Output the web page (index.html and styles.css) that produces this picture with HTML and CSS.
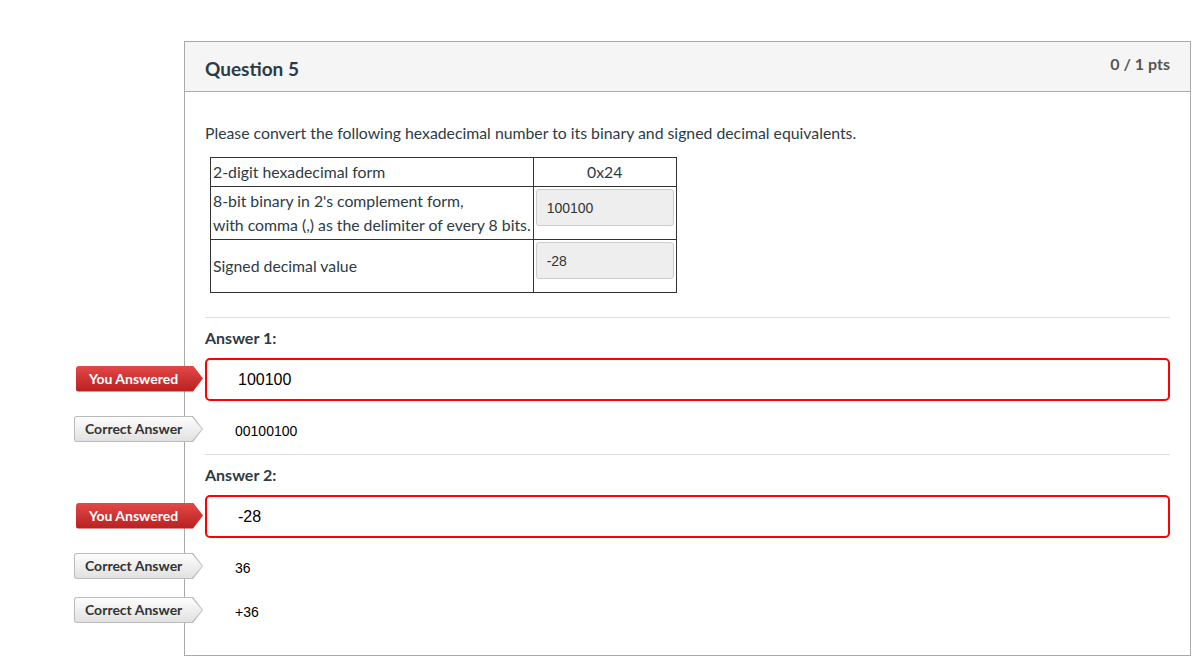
FILE: index.html
```
<!DOCTYPE html>
<html>

<head>
    <title>Question 5</title>
    <link rel="stylesheet" href="styles.css">
</head>

<body>
    <div class="question">
        <div class="question-header">
            <h2 class="question-title">Question 5</h2>
            <span class="points">0 / 1 pts</span>
        </div>
        <div class="question-body">
            <p class="question-text">Please convert the following hexadecimal number to its binary and signed decimal equivalents.</p>
            <table class="convert-table">
                <tr>
                    <td class="cell-label">2-digit hexadecimal form</td>
                    <td class="cell-value">0x24</td>
                </tr>
                <tr>
                    <td class="cell-label">8-bit binary in 2's complement form,<br>with comma (,) as the delimiter of every 8 bits.</td>
                    <td class="cell-input"><input class="blank" type="text" value="100100" readonly></td>
                </tr>
                <tr>
                    <td class="cell-label">Signed decimal value</td>
                    <td class="cell-input"><input class="blank" type="text" value="-28" readonly></td>
                </tr>
            </table>

            <div class="answer-group">
                <h3 class="answer-title">Answer 1:</h3>
                <div class="answer wrong">
                    <span class="tag tag-you">You Answered</span>
                    <span class="answer-text">100100</span>
                </div>
                <div class="answer correct">
                    <span class="tag tag-correct"><span class="tag-inner">Correct Answer</span></span>
                    <span class="answer-text">00100100</span>
                </div>
            </div>

            <div class="answer-group">
                <h3 class="answer-title">Answer 2:</h3>
                <div class="answer wrong">
                    <span class="tag tag-you">You Answered</span>
                    <span class="answer-text">-28</span>
                </div>
                <div class="answer correct">
                    <span class="tag tag-correct"><span class="tag-inner">Correct Answer</span></span>
                    <span class="answer-text">36</span>
                </div>
                <div class="answer correct">
                    <span class="tag tag-correct"><span class="tag-inner">Correct Answer</span></span>
                    <span class="answer-text">+36</span>
                </div>
            </div>
        </div>
    </div>
</body>

</html>
```

FILE: styles.css
```
body {
    margin: 0;
    background-color: white;
    font-family: Lato, "Noto Sans", sans-serif;
    color: #2d3b45;
}

.question {
    margin: 41px 0 0 184px;
    width: 1007px;
    border: 1px solid #aaaaaa;
    box-sizing: border-box;
}

.question-header {
    display: flex;
    justify-content: space-between;
    background-color: #f5f5f5;
    border-bottom: 1px solid #aaaaaa;
    height: 49px;
    padding: 0 20px 0 20px;
}

.question-title {
    margin: 15px 0 0 0;
    font-size: 19px;
    font-weight: bold;
    color: #2d3b45;
    line-height: 24px;
}

.points {
    margin-top: 12px;
    font-size: 16px;
    font-weight: bold;
    color: #555555;
    line-height: 20px;
}

.question-body {
    padding: 30px 20px 23px 20px;
}

.question-text {
    margin: 0 0 13px 0;
    font-size: 15.8px;
    line-height: 22px;
    color: #2d3b45;
}

.convert-table {
    margin-left: 5px;
    border-collapse: collapse;
    font-size: 15.8px;
    color: #2d3b45;
}

.convert-table td {
    border: 1px solid #333333;
    padding: 0 2px;
    line-height: 24px;
}

.cell-label {
    vertical-align: middle;
    padding: 2px 2px !important;
}

.cell-value {
    text-align: center;
    height: 24px;
}

.cell-input {
    vertical-align: top;
    width: 138px;
    padding: 2px 2px 13px 2px !important;
}

.blank {
    display: block;
    box-sizing: border-box;
    width: 138px;
    height: 37px;
    margin: 0;
    padding: 0 10px;
    border: 1px solid #cccccc;
    border-radius: 3px;
    background-color: #eeeeee;
    font-family: "Liberation Sans", Arial, sans-serif;
    font-size: 14px;
    color: #333333;
}

.answer-group {
    border-top: 1px solid #dddddd;
    margin-top: 24px;
}

.answer-group + .answer-group {
    margin-top: 3px;
}

.answer-title {
    margin: 9px 0 9px 0;
    font-size: 16px;
    font-weight: bold;
    line-height: 22px;
    color: #2d3b45;
}

.answer {
    position: relative;
    display: flex;
    align-items: center;
    font-family: "Liberation Sans", Arial, sans-serif;
    color: #000000;
}

.wrong {
    height: 43px;
    box-sizing: border-box;
    border: 2px solid #ff0000;
    border-radius: 5px;
    padding-left: 31px;
    font-size: 16px;
    margin-bottom: 6px;
}

.correct {
    height: 44px;
    padding-left: 30px;
    padding-top: 4px;
    box-sizing: border-box;
    font-size: 14px;
}

.tag {
    position: absolute;
    right: calc(100% + 2px);
    top: 50%;
    transform: translateY(-50%);
    font-family: Lato, "Noto Sans", sans-serif;
    font-size: 14px;
    font-weight: bold;
    white-space: nowrap;
    clip-path: polygon(0 0, calc(100% - 10px) 0, 100% 50%, calc(100% - 10px) 100%, 0 100%);
}

.tag-you {
    height: 26px;
    line-height: 26px;
    width: 127px;
    box-sizing: border-box;
    padding-left: 13px;
    color: white;
    border-radius: 3px 0 0 3px;
    background: linear-gradient(#e14848, #bb1f1f);
}

.wrong .tag {
    right: calc(100% + 4px);
    margin-top: -1px;
}

.tag-correct {
    height: 26px;
    width: 129px;
    padding: 1px;
    box-sizing: border-box;
    border-radius: 3px 0 0 3px;
    background-color: #bbbbbb;
}

.tag-inner {
    display: block;
    height: 24px;
    line-height: 24px;
    padding-left: 10px;
    color: #333333;
    border-radius: 2px 0 0 2px;
    background: linear-gradient(#fdfdfd, #e1e1e1);
    clip-path: polygon(0 0, calc(100% - 10px) 0, 100% 50%, calc(100% - 10px) 100%, 0 100%);
}
```
